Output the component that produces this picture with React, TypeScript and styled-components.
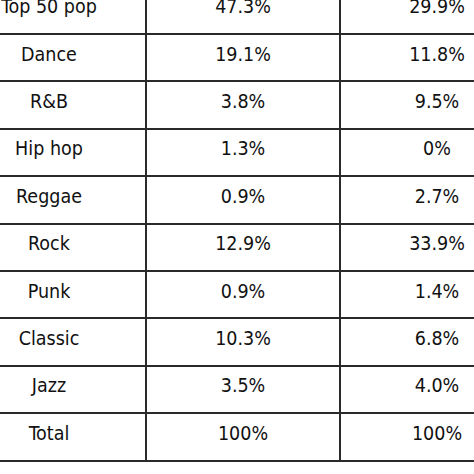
import React from "react";
import styled, { createGlobalStyle } from "styled-components";

const Global = createGlobalStyle`
  html, body { margin: 0; padding: 0; background: #ffffff; overflow: hidden; }
  body { width: 474px; height: 474px; }
`;

const Frame = styled.div`
  width: 474px;
  height: 474px;
  overflow: hidden;
  background: #ffffff;
`;

const Table = styled.table`
  border-collapse: collapse;
  width: 584px;
  min-width: 584px;
  margin-left: -49px;
  margin-top: -14.4px;
  table-layout: fixed;
  font-family: "DejaVu Sans Condensed", "DejaVu Sans", sans-serif;
  font-stretch: condensed;
  font-size: 19.5px;
  color: #111111;
`;

const Col = styled.col`
  width: 194px;
`;

const Row = styled.tr`
  height: 47.4px;
`;

const Cell = styled.td`
  border: 2px solid #2a2a2a;
  text-align: center;
  vertical-align: middle;
  padding: 0 0 6px 0;
  line-height: 22px;
  white-space: nowrap;
`;

const rows: [string, string, string][] = [
  ["Top 50 pop", "47.3%", "29.9%"],
  ["Dance", "19.1%", "11.8%"],
  ["R&B", "3.8%", "9.5%"],
  ["Hip hop", "1.3%", "0%"],
  ["Reggae", "0.9%", "2.7%"],
  ["Rock", "12.9%", "33.9%"],
  ["Punk", "0.9%", "1.4%"],
  ["Classic", "10.3%", "6.8%"],
  ["Jazz", "3.5%", "4.0%"],
  ["Total", "100%", "100%"],
];

export default function App() {
  return (
    <Frame>
      <Global />
      <Table>
        <colgroup>
          <Col />
          <Col />
          <Col />
        </colgroup>
        <tbody>
          {rows.map((r) => (
            <Row key={r[0]}>
              <Cell>{r[0]}</Cell>
              <Cell>{r[1]}</Cell>
              <Cell>{r[2]}</Cell>
            </Row>
          ))}
        </tbody>
      </Table>
    </Frame>
  );
}
